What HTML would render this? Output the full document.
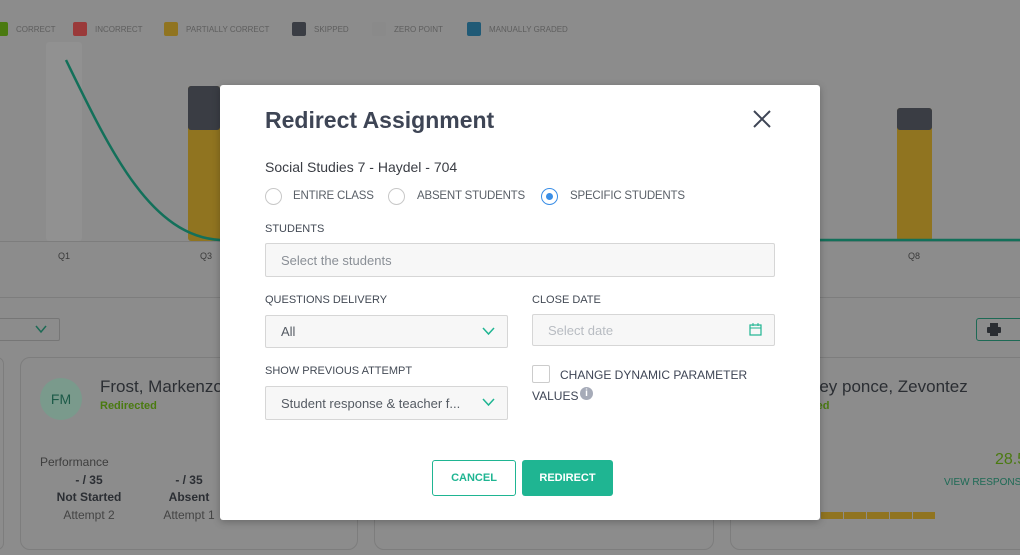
<!DOCTYPE html>
<html><head><meta charset="utf-8"><style>
*{box-sizing:border-box;margin:0;padding:0}
body{width:1020px;height:555px;overflow:hidden;background:#8c8c8c;font-family:"Liberation Sans",sans-serif;position:relative;color:#2b2e33}
.abs{position:absolute}
.leg{position:absolute;top:22px;font-size:8px;color:#5e5e5e;display:flex;align-items:center}
.leg i{display:inline-block;width:14px;height:14px;border-radius:2px;margin-right:8px}
.card{position:absolute;top:357px;height:193px;border:1px solid #7d7d7d;border-radius:10px;background:#8c8c8c}
.modal{position:absolute;left:220px;top:85px;width:600px;height:435px;background:#fff;border-radius:3px;box-shadow:0 2px 8px rgba(0,0,0,.25)}
.lbl{position:absolute;font-size:11px;color:#434a55}
.inp{position:absolute;background:#f7f7f7;border:1px solid #d6d6d6;border-radius:2px;font-size:13px;color:#8a8f96;padding-left:15px;display:flex;align-items:center}
.radio{position:absolute;top:103px;width:17px;height:17px;border:1px solid #c8c8c8;border-radius:50%}
.rl{position:absolute;top:105px;font-size:11.5px;color:#5a6068;letter-spacing:-0.2px}
.chev{position:absolute;right:12px;top:50%;margin-top:-6px}
</style></head><body>
<div class="leg" style="left:-6px"><i style="background:#4a7a10"></i>CORRECT</div>
<div class="leg" style="left:73px"><i style="background:#9a3a3a"></i>INCORRECT</div>
<div class="leg" style="left:164px"><i style="background:#907420"></i>PARTIALLY CORRECT</div>
<div class="leg" style="left:292px"><i style="background:#3a3d44"></i>SKIPPED</div>
<div class="leg" style="left:372px"><i style="background:#8a8a8a"></i>ZERO POINT</div>
<div class="leg" style="left:467px"><i style="background:#205a76"></i>MANUALLY GRADED</div>
<svg class="abs" style="left:0;top:0" width="1020" height="300">
<rect x="46" y="42" width="36" height="199" rx="3" fill="#919191"/>
<rect x="188" y="86" width="32" height="155" rx="3" fill="#907420"/>
<rect x="188" y="86" width="32" height="44" rx="3" fill="#3a3d44"/>
<rect x="897" y="108" width="35" height="133" rx="3" fill="#907420"/>
<rect x="897" y="108" width="35" height="22" rx="3" fill="#3a3d44"/>
<line x1="0" y1="241.5" x2="1020" y2="241.5" stroke="#7d7d7d"/>
<path d="M66 60 C110 150 150 236 220 240 L1020 240" stroke="#13705a" stroke-width="2.5" fill="none"/>
<text x="58" y="259" font-size="9" fill="#3a3a3a" font-family="Liberation Sans">Q1</text>
<text x="200" y="259" font-size="9" fill="#3a3a3a" font-family="Liberation Sans">Q3</text>
<text x="908" y="259" font-size="9" fill="#3a3a3a" font-family="Liberation Sans">Q8</text>
<line x1="0" y1="297.5" x2="1020" y2="297.5" stroke="#7d7d7d"/>
</svg>
<div class="abs" style="left:-5px;top:318px;width:65px;height:23px;border:1px solid #767676;border-radius:2px"></div>
<svg class="abs" style="left:35px;top:325px" width="12" height="9"><path d="M1 1 L6 7 L11 1" stroke="#1d6a55" stroke-width="1.5" fill="none"/></svg>
<div class="abs" style="left:976px;top:318px;width:50px;height:23px;border:1px solid #1d6a55;border-radius:3px"></div>
<svg class="abs" style="left:986px;top:322px" width="16" height="15"><rect x="4" y="1" width="8" height="4" fill="#2a2d32"/><rect x="1" y="5" width="14" height="6" rx="1" fill="#2a2d32"/><rect x="4" y="10" width="8" height="4" fill="#2a2d32"/></svg>
<div class="card" style="left:-10px;width:14px"></div>
<div class="card" style="left:20px;width:338px">
 <div class="abs" style="left:19px;top:20px;width:42px;height:42px;border-radius:50%;background:#7a9a8c;color:#1c5a48;font-size:14px;text-align:center;line-height:42px">FM</div>
 <div class="abs" style="left:79px;top:19px;font-size:17px;color:#2b2e33">Frost, Markenzo</div>
 <div class="abs" style="left:79px;top:42px;font-size:11px;font-weight:bold;color:#4a7a10">Redirected</div>
 <div class="abs" style="left:19px;top:97px;font-size:12px;color:#3e3e3e">Performance</div>
 <div class="abs" style="left:33px;top:115px;font-size:12px;font-weight:bold;width:70px;text-align:center">- / 35</div>
 <div class="abs" style="left:33px;top:132px;font-size:12px;font-weight:bold;width:70px;text-align:center">Not Started</div>
 <div class="abs" style="left:33px;top:150px;font-size:12px;color:#444;width:70px;text-align:center">Attempt 2</div>
 <div class="abs" style="left:133px;top:115px;font-size:12px;font-weight:bold;width:70px;text-align:center">- / 35</div>
 <div class="abs" style="left:133px;top:132px;font-size:12px;font-weight:bold;width:70px;text-align:center">Absent</div>
 <div class="abs" style="left:133px;top:150px;font-size:12px;color:#444;width:70px;text-align:center">Attempt 1</div>
</div>
<div class="card" style="left:374px;width:340px"></div>
<div class="card" style="left:730px;width:310px">
 <div class="abs" style="left:60px;top:19px;font-size:17px;color:#2b2e33">Kelley ponce, Zevontez</div>
 <div class="abs" style="left:60px;top:42px;font-size:11px;font-weight:bold;color:#4a7a10">Graded</div>
 <div class="abs" style="left:60px;top:95px;font-size:12px;color:#3e3e3e">e</div>
 <div class="abs" style="left:264px;top:93px;font-size:16px;color:#4a7a10">28.5</div>
 <div class="abs" style="left:213px;top:119px;font-size:10px;color:#1d6a55">VIEW RESPONSES</div>
 <div class="abs" style="left:90px;top:154px;width:114px;height:7px;background:repeating-linear-gradient(90deg,#907420 0 22px,#8c8c8c 22px 23px)"></div>
</div>

<div class="modal">
 <div class="abs" style="left:45px;top:22px;font-size:23px;font-weight:bold;color:#3e4555">Redirect Assignment</div>
 <svg class="abs" style="left:533px;top:25px" width="18" height="18"><path d="M1 1 L17 17 M17 1 L1 17" stroke="#3e4555" stroke-width="2"/></svg>
 <div class="abs" style="left:45px;top:74px;font-size:14px;color:#3a3d44">Social Studies 7 - Haydel - 704</div>
 <div class="radio" style="left:45px"></div><div class="rl" style="left:73px">ENTIRE CLASS</div>
 <div class="radio" style="left:168px"></div><div class="rl" style="left:197px">ABSENT STUDENTS</div>
 <div class="radio" style="left:321px;border-color:#3a8ee6"><div style="width:7px;height:7px;border-radius:50%;background:#3a8ee6;margin:4px"></div></div><div class="rl" style="left:350px">SPECIFIC STUDENTS</div>
 <div class="lbl" style="left:45px;top:138px">STUDENTS</div>
 <div class="inp" style="left:45px;top:158px;width:510px;height:34px">Select the students</div>
 <div class="lbl" style="left:45px;top:209px">QUESTIONS DELIVERY</div>
 <div class="inp" style="left:45px;top:230px;width:243px;height:33px;color:#555b63">All<svg class="chev" width="13" height="10"><path d="M1 2 L6.5 8 L12 2" stroke="#1fb592" stroke-width="1.5" fill="none"/></svg></div>
 <div class="lbl" style="left:312px;top:209px">CLOSE DATE</div>
 <div class="inp" style="left:312px;top:229px;width:243px;height:32px;color:#b8bcc2">Select date<svg class="chev" width="13" height="13" style="margin-top:-7px"><rect x="1" y="2" width="11" height="10" fill="none" stroke="#1fb592" stroke-width="1.2"/><line x1="1" y1="5" x2="12" y2="5" stroke="#1fb592"/><line x1="4" y1="0" x2="4" y2="3" stroke="#1fb592"/><line x1="9" y1="0" x2="9" y2="3" stroke="#1fb592"/></svg></div>
 <div class="lbl" style="left:45px;top:280px">SHOW PREVIOUS ATTEMPT</div>
 <div class="inp" style="left:45px;top:301px;width:243px;height:34px;color:#555b63">Student response &amp; teacher f...<svg class="chev" width="13" height="10"><path d="M1 2 L6.5 8 L12 2" stroke="#1fb592" stroke-width="1.5" fill="none"/></svg></div>
 <div class="abs" style="left:312px;top:280px;width:18px;height:18px;border:1px solid #ccc;border-radius:2px"></div>
 <div class="abs" style="left:340px;top:283px;font-size:12px;color:#3e4555">CHANGE DYNAMIC PARAMETER</div>
 <div class="abs" style="left:312px;top:304px;font-size:12px;color:#3e4555">VALUES</div>
 <div class="abs" style="left:360px;top:302px;width:13px;height:13px;border-radius:50%;background:#a6abb8;color:#fff;font-size:10px;font-weight:bold;text-align:center;line-height:13px">i</div>
 <div class="abs" style="left:212px;top:375px;width:84px;height:36px;border:1px solid #1fb592;border-radius:3px;color:#1fb592;font-size:11px;font-weight:bold;text-align:center;line-height:34px">CANCEL</div>
 <div class="abs" style="left:302px;top:375px;width:91px;height:36px;background:#1fb592;border-radius:3px;color:#fff;font-size:11px;font-weight:bold;text-align:center;line-height:36px">REDIRECT</div>
</div>
</body></html>
